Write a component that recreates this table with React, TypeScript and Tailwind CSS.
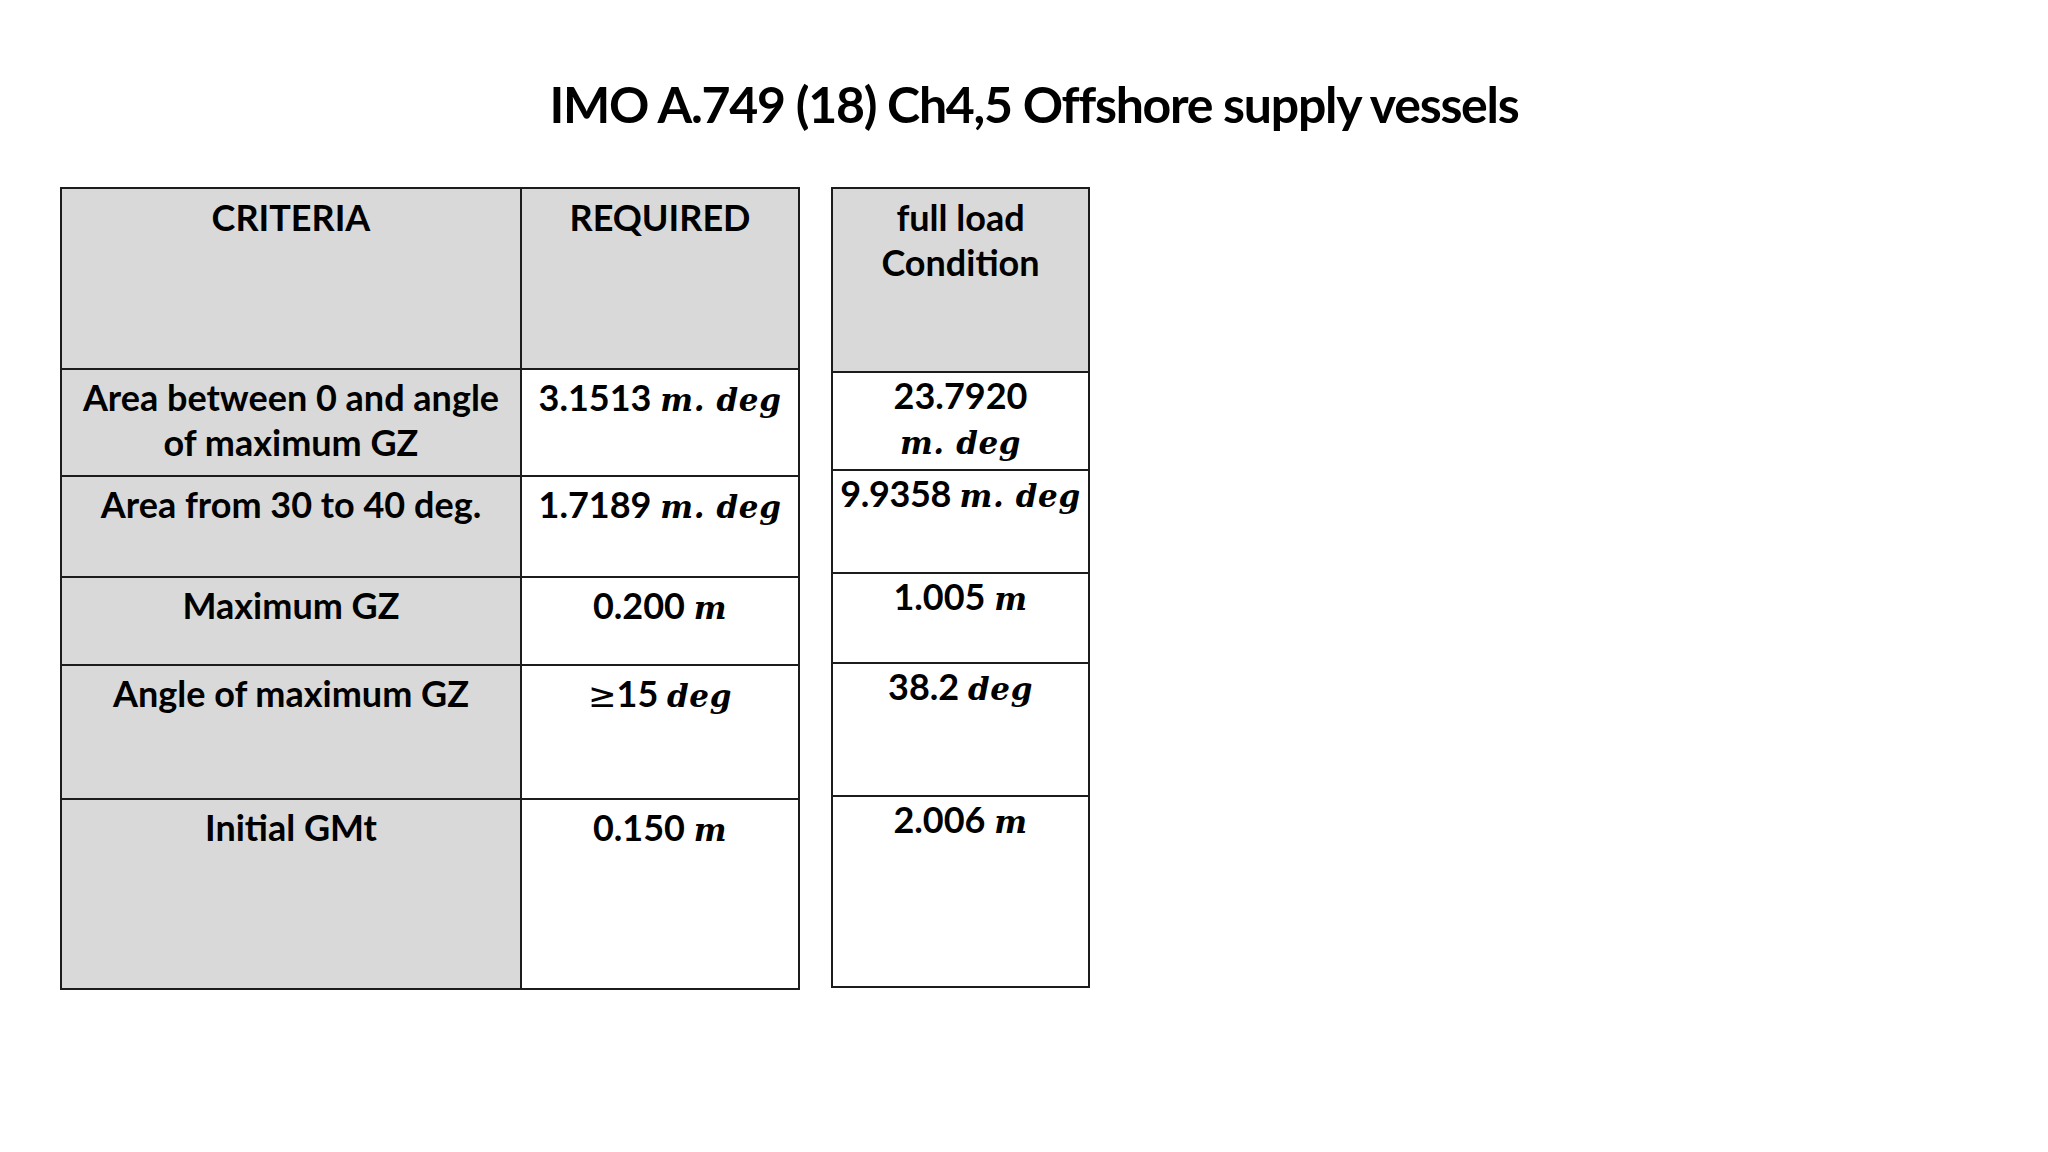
import React from "react"

const text = "font-['Lato',sans-serif] font-bold text-[36px] leading-[45px] text-black"
const math = "font-['DejaVu_Serif',serif] italic font-bold text-[31px] tracking-[0.02em]"

function M({ children }: { children: React.ReactNode }) {
  return <span className={math}>{children}</span>
}

type Row = { h: string; crit: React.ReactNode; req: React.ReactNode }

const rows: Row[] = [
  {
    h: "h-[107px]",
    crit: (
      <>
        Area between 0 and angle
        <br />
        of maximum GZ
      </>
    ),
    req: (
      <>
        3.1513 <M>m. deg</M>
      </>
    ),
  },
  {
    h: "h-[101px]",
    crit: "Area from 30 to 40 deg.",
    req: (
      <>
        1.7189 <M>m. deg</M>
      </>
    ),
  },
  {
    h: "h-[88px]",
    crit: "Maximum GZ",
    req: (
      <>
        0.200 <M>m</M>
      </>
    ),
  },
  {
    h: "h-[134px]",
    crit: "Angle of maximum GZ",
    req: (
      <>
        <span className="font-['DejaVu_Sans',sans-serif] font-normal text-[34px]">≥</span>15 <M>deg</M>
      </>
    ),
  },
  {
    h: "h-[190px]",
    crit: "Initial GMt",
    req: (
      <>
        0.150 <M>m</M>
      </>
    ),
  },
]

const results: { h: string; v: React.ReactNode }[] = [
  {
    h: "h-[98px]",
    v: (
      <>
        23.7920
        <br />
        <M>m. deg</M>
      </>
    ),
  },
  {
    h: "h-[103px]",
    v: (
      <span className="whitespace-nowrap tracking-[-0.01em]">
        9.9358 <M>m. deg</M>
      </span>
    ),
  },
  {
    h: "h-[90px]",
    v: (
      <>
        1.005 <M>m</M>
      </>
    ),
  },
  {
    h: "h-[133px]",
    v: (
      <>
        38.2 <M>deg</M>
      </>
    ),
  },
  {
    h: "h-[191px]",
    v: (
      <>
        2.006 <M>m</M>
      </>
    ),
  },
]

export default function App() {
  return (
    <div className="w-[2048px] h-[1152px] bg-white overflow-hidden">
      {/* Slide title */}
      <div className="pt-[69px] pl-[20px] text-center">
        <h1 className="font-['Lato',sans-serif] font-bold text-[50px] leading-[70px] tracking-[-0.025em] text-black">
          IMO A.749 (18) Ch4,5 Offshore supply vessels
        </h1>
      </div>

      <div className="flex items-start gap-[31px] pl-[60px] pt-[48px]">
        {/* Criteria / required table */}
        <div className={`w-[740px] border-2 border-[#1c1c1c] ${text}`}>
          <div className="flex h-[179px]">
            <div className="w-[458px] bg-[#d9d9d9] text-center pt-[6px]">CRITERIA</div>
            <div className="flex-1 bg-[#d9d9d9] border-l-2 border-[#1c1c1c] text-center pt-[6px]">REQUIRED</div>
          </div>
          {rows.map((r, i) => (
            <div key={i} className={`flex border-t-2 border-[#1c1c1c] ${r.h}`}>
              <div className="w-[458px] bg-[#d9d9d9] text-center pt-[5px]">{r.crit}</div>
              <div className="flex-1 bg-white border-l-2 border-[#1c1c1c] text-center pt-[5px] whitespace-nowrap">
                {r.req}
              </div>
            </div>
          ))}
        </div>

        {/* Condition results */}
        <div className={`w-[259px] border-2 border-[#1c1c1c] ${text}`}>
          <div className="h-[182px] bg-[#d9d9d9] text-center pt-[6px]">
            full load
            <br />
            Condition
          </div>
          {results.map((r, i) => (
            <div key={i} className={`border-t-2 border-[#1c1c1c] bg-white text-center ${r.h}`}>
              {r.v}
            </div>
          ))}
        </div>
      </div>
    </div>
  )
}
